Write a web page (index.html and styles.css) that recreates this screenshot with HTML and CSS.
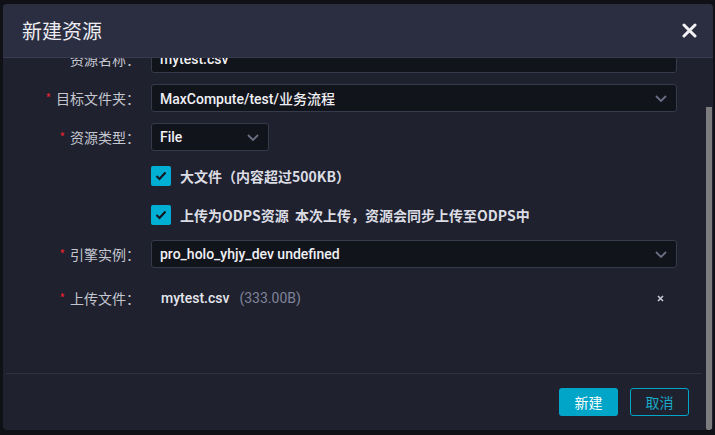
FILE: index.html
```html
<!DOCTYPE html>
<html>
	<head>
		<meta http-equiv="Content-Type" content="text/html; charset=UTF-8">
		<title>新建资源</title>
		<link rel="stylesheet" href="styles.css">
	</head>
	<body>
		<div class="modal">
			<div class="modal-head">
				<span class="modal-title">新建资源</span>
				<span class="modal-close"><svg width="15" height="15" viewBox="0 0 15 15"><path d="M2 2L13 13M13 2L2 13" stroke="#f2f2f5" stroke-width="3" stroke-linecap="round"/></svg></span>
			</div>
			<div class="modal-main">
				<div class="modal-scroll">
					<div class="form">
<!-- ---------------------------------------------------------------- -->
						<div class="row">
							<div class="row-label"><span class="star">*</span>资源名称：</div>
							<div class="input">mytest.csv</div>
						</div>
						<div class="row">
							<div class="row-label"><span class="star">*</span>目标文件夹：</div>
							<div class="input">MaxCompute/test/业务流程<svg class="chev" width="12" height="7" viewBox="0 0 12 7"><path d="M1 1L6 6L11 1" fill="none" stroke="#6b6e85" stroke-width="1.8"/></svg></div>
						</div>
						<div class="row">
							<div class="row-label"><span class="star">*</span>资源类型：</div>
							<div class="input input-small">File<svg class="chev" width="12" height="7" viewBox="0 0 12 7"><path d="M1 1L6 6L11 1" fill="none" stroke="#6b6e85" stroke-width="1.8"/></svg></div>
						</div>
						<div class="row">
							<div class="row-label"></div>
							<span class="check"><svg width="12" height="10" viewBox="0 0 12 10"><path d="M1.5 5L4.5 8L10.5 1.5" fill="none" stroke="#141722" stroke-width="2.2"/></svg></span>
							<span class="check-text">大文件（内容超过500KB）</span>
						</div>
						<div class="row">
							<div class="row-label"></div>
							<span class="check"><svg width="12" height="10" viewBox="0 0 12 10"><path d="M1.5 5L4.5 8L10.5 1.5" fill="none" stroke="#141722" stroke-width="2.2"/></svg></span>
							<span class="check-text">上传为ODPS资源&nbsp;&nbsp;本次上传，资源会同步上传至ODPS中</span>
						</div>
						<div class="row">
							<div class="row-label"><span class="star">*</span>引擎实例：</div>
							<div class="input">pro_holo_yhjy_dev undefined<svg class="chev" width="12" height="7" viewBox="0 0 12 7"><path d="M1 1L6 6L11 1" fill="none" stroke="#6b6e85" stroke-width="1.8"/></svg></div>
						</div>
						<div class="row row-upload">
							<div class="row-label"><span class="star">*</span>上传文件：</div>
							<div class="upload">
								<span class="upload-name">mytest.csv</span>
								<span class="upload-size">(333.00B)</span>
								<span class="upload-del"><svg width="7" height="7" viewBox="0 0 7 7"><path d="M1 1L6 6M6 1L1 6" stroke="#c9cbd6" stroke-width="1.6"/></svg></span>
							</div>
						</div>
<!-- ---------------------------------------------------------------- -->
					</div>
					<div class="modal-foot">
						<span class="btn btn-primary">新建</span>
						<span class="btn btn-ghost">取消</span>
					</div>
				</div>
				<div class="scrollbar"><div class="scrollbar-thumb"></div></div>
			</div>
		</div>
	</body>
</html>
```

FILE: styles.css
```css
body{margin: 0px; background: #0f1117; font-family: Roboto, "Noto Sans CJK SC", sans-serif; font-size: 14px; overflow: hidden;}
.modal{display: flex; flex-direction: column; width: 710px; height: 426px; margin: 4px 2px 0px 3px; background: #1f212e; border-radius: 4px; overflow: hidden;}
.modal-head{display: flex; justify-content: space-between; align-items: center; height: 53px; padding: 0px 16px 0px 19px; background: #2b2e40; border-bottom: 1px solid #383b50; position: relative; z-index: 1;}
.modal-title{font-family: "Noto Sans CJK SC", sans-serif; font-size: 20px; color: #ececf2;}
.modal-close{display: flex; width: 15px; height: 15px;}
.modal-main{flex: 1; display: flex; min-height: 0px;}
.modal-scroll{flex: 1; display: flex; flex-direction: column; overflow: hidden;}
.form{flex: 1; display: flex; flex-direction: column; gap: 11px; margin-top: -13px;}
.row{display: flex; align-items: center; min-height: 28px;}
.row-upload{margin-top: 5px;}
.row-label{width: 148px; padding-right: 11px; box-sizing: border-box; text-align: right; color: #c4c6d0; font-family: "Noto Sans CJK SC", sans-serif; white-space: nowrap;}
.star{color: #e8232e; font-size: 12px; margin-right: 5px; vertical-align: 1px;}
.input{display: flex; justify-content: space-between; align-items: center; width: 526px; height: 28px; box-sizing: border-box; padding: 0px 9px 0px 8px; background: #12141c; border: 1px solid #363a4d; border-radius: 3px; color: #f0f0f4; font-weight: 500;}
.input-small{width: 118px;}
.chev{flex: none;}
.check{display: flex; justify-content: center; align-items: center; width: 20px; height: 20px; background: #00b0d4; border-radius: 2px; margin-right: 9px;}
.check-text{color: #dcdde4; font-weight: 600; font-family: "Noto Sans CJK SC", sans-serif;}
.upload{display: flex; align-items: center; width: 526px; box-sizing: border-box; padding: 0px 13px 0px 10px;}
.upload-name{color: #e4e5ec; font-weight: 500;}
.upload-size{color: #80839a; margin-left: 10px; flex: 1;}
.upload-del{display: flex;}
.modal-foot{display: flex; justify-content: flex-end; gap: 12px; margin: 0px 4px 0px 3px; padding: 14px 13px; border-top: 1px solid #2e3144;}
.btn{display: flex; justify-content: center; align-items: center; width: 59px; height: 28px; box-sizing: border-box; border-radius: 3px; font-family: "Noto Sans CJK SC", sans-serif; font-size: 14px;}
.btn-primary{background: #00a5c8; color: #ffffff;}
.btn-ghost{border: 1px solid #00a5c8; color: #1aa9c8;}
.scrollbar{display: flex; flex-direction: column; width: 6px; padding-top: 49px; margin-right: 1px;}
.scrollbar-thumb{flex: 1; background: #7c7c7e; border-radius: 0px 0px 2px 2px;}
```
